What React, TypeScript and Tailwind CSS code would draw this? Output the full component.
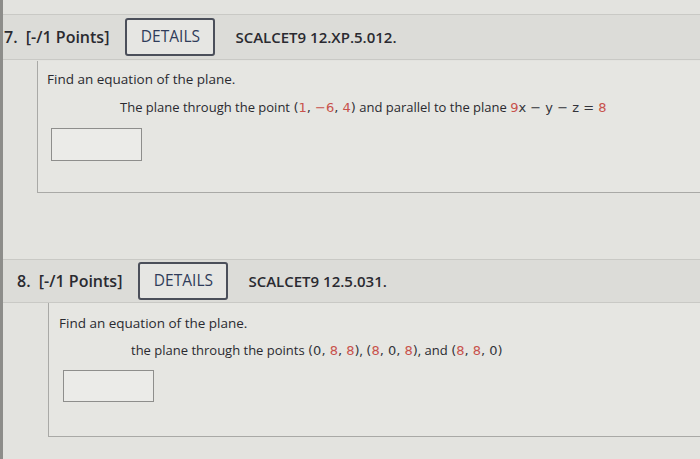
import React from 'react';

type Part = { text: string; red?: boolean };

const Math: React.FC<{ parts: Part[] }> = ({ parts }) => (
  <span style={{ fontFamily: '"DejaVu Sans", Verdana, sans-serif' }} className="text-[13px]">
    {parts.map((p, i) => (
      <span key={i} className={p.red ? 'text-[#c8514b]' : 'text-[#33343a]'}>
        {p.text}
      </span>
    ))}
  </span>
);

const Header: React.FC<{ num: string; code: string; left: string; h: string; btnGap: string }> = ({ num, code, left, h, btnGap }) => (
  <div className={`flex items-center ${h} ${left} border-y border-[#c9c9c5] bg-[#dcdcd8]`}>
    <span className="whitespace-pre text-[16px] font-semibold text-[#2a2a30]">
      {num}  [-/1 Points]
    </span>
    <button className={`${btnGap} flex h-[38px] w-[90px] items-center justify-center rounded-[3px] border-2 border-[#4b4f5a] bg-[#e6e6e3] text-[15.5px] font-medium text-[#2f3c5a]`}>
      DETAILS
    </button>
    <span className="ml-[20px] text-[15px] font-semibold text-[#2a2a30]">{code}</span>
  </div>
);

export default function App() {
  return (
    <div
      className="h-[459px] w-[700px] overflow-hidden bg-[#e3e3df] text-[#2a2a30]"
      style={{ fontFamily: '"Open Sans", "Noto Sans", sans-serif' }}
    >
      <div className="flex h-full border-l-[3px] border-[#8d8d8a]">
        <div className="flex-1">
          {/* Question 7 */}
          <div className="h-[14px]" />
          <Header num="7." code="SCALCET9 12.XP.5.012." left="pl-[1px]" h="h-[46px]" btnGap="ml-[16px]" />
          <div className="ml-[34px] mt-[1px] h-[132px] border-b border-l border-[#a9a9a6] bg-[#e6e6e2] pl-[9px] pt-[10px]">
            <p className="text-[13.5px] leading-[17px]">Find an equation of the plane.</p>
            <p className="ml-[73px] mt-[11px] text-[13px] leading-[16px]">
              The plane through the point{' '}
              <Math parts={[{ text: '(' }, { text: '1', red: true }, { text: ', ' }, { text: '−6', red: true }, { text: ', ' }, { text: '4', red: true }, { text: ')' }]} />{' '}
              and parallel to the plane{' '}
              <Math parts={[{ text: '9', red: true }, { text: 'x − y − z = ' }, { text: '8', red: true }]} />
            </p>
            <div className="ml-[4px] mt-[12px] h-[33px] w-[91px] border border-[#8e8e8c] bg-[#ebebe8]" />
          </div>

          {/* Question 8 */}
          <div className="h-[66px]" />
          <Header num="8." code="SCALCET9 12.5.031." left="pl-[14px]" h="h-[44px]" btnGap="ml-[16px]" />
          <div className="ml-[45px] h-[134px] border-b border-l border-[#a9a9a6] bg-[#e6e6e2] pl-[10px] pt-[12px]">
            <p className="text-[13.5px] leading-[17px]">Find an equation of the plane.</p>
            <p className="ml-[72px] mt-[10px] text-[13px] leading-[16px]">
              the plane through the points{' '}
              <Math parts={[{ text: '(0, ' }, { text: '8', red: true }, { text: ', ' }, { text: '8', red: true }, { text: ')' }]} />,{' '}
              <Math parts={[{ text: '(' }, { text: '8', red: true }, { text: ', 0, ' }, { text: '8', red: true }, { text: ')' }]} />, and{' '}
              <Math parts={[{ text: '(' }, { text: '8', red: true }, { text: ', ' }, { text: '8', red: true }, { text: ', 0)' }]} />
            </p>
            <div className="ml-[4px] mt-[11px] h-[32px] w-[91px] border border-[#8e8e8c] bg-[#ebebe8]" />
          </div>
        </div>
      </div>
    </div>
  );
}
